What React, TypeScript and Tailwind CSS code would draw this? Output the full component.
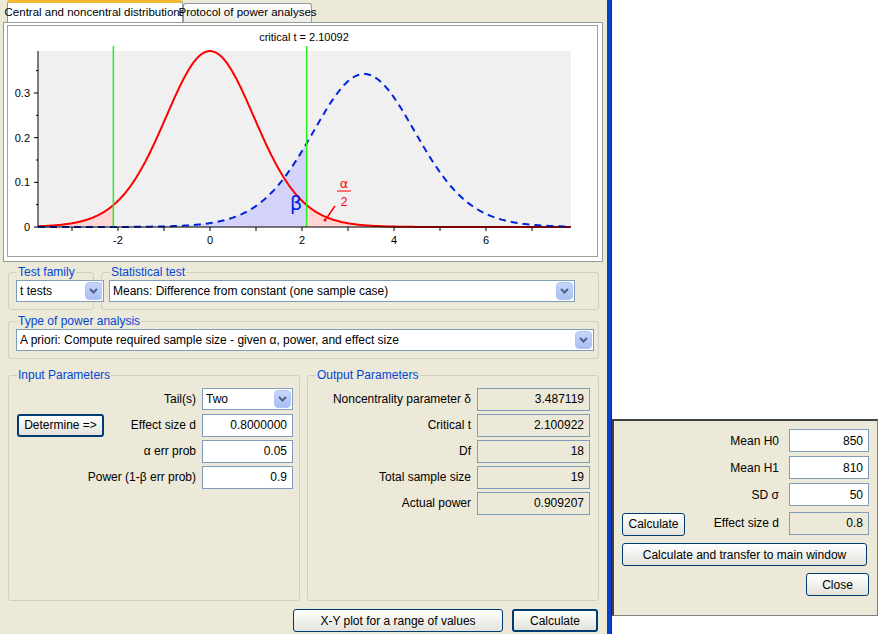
import React from "react";

const X0 = 202, SX = 46, Y0 = 201, SY = 446.7;

function tpdf(t: number, df: number) {
  const c = 0.3939;
  return c * Math.pow(1 + (t * t) / df, -(df + 1) / 2);
}
const central = (t: number) => tpdf(t, 18);
const nonc = (t: number) => tpdf((t - 3.35) / 1.15, 18) / 1.15;

function path(f: (t: number) => number, a: number, b: number) {
  const pts: string[] = [];
  for (let t = a; t <= b; t += 0.02) pts.push(`${(X0 + t * SX).toFixed(1)},${(Y0 - f(t) * SY).toFixed(1)}`);
  return "M" + pts.join("L");
}
function area(f: (t: number) => number, a: number, b: number) {
  return `${path(f, a, b)}L${X0 + b * SX},${Y0}L${X0 + a * SX},${Y0}Z`;
}

function Chart() {
  const crit = 2.10092;
  const cx = (t: number) => X0 + t * SX;
  return (
    <svg width={591} height={230} className="block">
      <rect x={30} y={25} width={533} height={177} fill="#f0f0f0" />
      <path d={area(central, -3.74, -crit)} fill="#ffd6d6" />
      <path d={area(central, crit, 7.85)} fill="#ffd6d6" />
      <path d={area(nonc, -3.74, crit)} fill="#d4d4fa" />
      <path d={path(central, -3.74, 7.85)} fill="none" stroke="#ff0000" strokeWidth={2} />
      <path d={path(nonc, -3.74, 7.85)} fill="none" stroke="#0022dd" strokeWidth={2} strokeDasharray="7 5" />
      <line x1={cx(-crit)} y1={20} x2={cx(-crit)} y2={Y0} stroke="#22ee22" strokeWidth={1.5} />
      <line x1={cx(crit)} y1={20} x2={cx(crit)} y2={Y0} stroke="#22ee22" strokeWidth={1.5} />
      <line x1={30} y1={Y0} x2={563} y2={Y0} stroke="#000" />
      <line x1={30} y1={25} x2={30} y2={Y0} stroke="#000" />
      {[0, 0.1, 0.2, 0.3].map((v) => (
        <g key={v}>
          <line x1={26} x2={30} y1={Y0 - v * SY} y2={Y0 - v * SY} stroke="#000" />
          <text x={22} y={Y0 - v * SY + 4} fontSize={11} textAnchor="end" fontFamily="Liberation Sans, sans-serif">{v}</text>
        </g>
      ))}
      {[0.05, 0.15, 0.25, 0.35].map((v) => (
        <line key={v} x1={28} x2={30} y1={Y0 - v * SY} y2={Y0 - v * SY} stroke="#000" />
      ))}
      {[-3, -2, -1, 0, 1, 2, 3, 4, 5, 6, 7].map((v) => (
        <line key={v} x1={cx(v)} x2={cx(v)} y1={Y0} y2={Y0 + 4} stroke="#000" />
      ))}
      {[-2, 0, 2, 4, 6].map((v) => (
        <text key={v} x={cx(v)} y={Y0 + 17} fontSize={11} textAnchor="middle" fontFamily="Liberation Sans, sans-serif">{v}</text>
      ))}
      <text x={296} y={15} fontSize={11} textAnchor="middle" fontFamily="Liberation Sans, sans-serif">critical t = 2.10092</text>
      <text x={288} y={184} fontSize={19} fill="#0022dd" textAnchor="middle" fontFamily="DejaVu Sans, sans-serif">β</text>
      <text x={336} y={162} fontSize={13} fill="#ff0000" textAnchor="middle" fontFamily="DejaVu Sans, sans-serif">α</text>
      <line x1={329} x2={343} y1={165} y2={165} stroke="#ff0000" />
      <text x={336} y={180} fontSize={12} fill="#ff0000" textAnchor="middle" fontFamily="Liberation Sans, sans-serif">2</text>
      <line x1={327} y1={180} x2={318} y2={193} stroke="#ff0000" strokeWidth={1.5} />
      <circle cx={317} cy={194} r={1.5} fill="#ff0000" />
    </svg>
  );
}

function Chevron() {
  return (
    <div className="w-[17px] h-[18px] mr-[1px] rounded-sm bg-gradient-to-b from-[#c7d5fb] to-[#a9bff3] border border-[#b1c4f4] flex items-center justify-center">
      <svg width="9" height="6" viewBox="0 0 9 6"><path d="M1 1L4.5 4.5L8 1" stroke="#4d6185" strokeWidth="2" fill="none" /></svg>
    </div>
  );
}

function Select({ text, w }: { text: string; w: string }) {
  return (
    <div className={`${w} h-[22px] bg-white border border-[#7f9db9] flex items-center justify-between pl-[3px]`}>
      <span className="truncate">{text}</span>
      <Chevron />
    </div>
  );
}

function Field({ v, out }: { v: string; out?: boolean }) {
  return (
    <div className={`h-[23px] border border-[#7f9db9] flex items-center justify-end pr-[5px] ${out ? "bg-[#ece9d8] w-[113px]" : "bg-white w-[91px]"}`}>{v}</div>
  );
}

function Group({ title, className, children }: { title: string; className: string; children?: React.ReactNode }) {
  return (
    <div className={`relative border border-[#d0d0bf] rounded-[3px] ${className}`}>
      <span className="absolute -top-[9px] left-[8px] px-[1px] bg-[#ece9d8] text-[#0046d5] leading-4">{title}</span>
      {children}
    </div>
  );
}

function Btn({ children, className }: { children: React.ReactNode; className: string }) {
  return (
    <div className={`h-[23px] border border-[#003c74] rounded-[3px] bg-gradient-to-b from-white to-[#e3e3db] flex items-center justify-center whitespace-nowrap ${className}`}>{children}</div>
  );
}

export default function App() {
  const inputs: [string, React.ReactNode][] = [
    ["Effect size d", <Field v="0.8000000" />],
    ["α err prob", <Field v="0.05" />],
    ["Power (1-β err prob)", <Field v="0.9" />],
  ];
  const outputs: [string, string][] = [
    ["Noncentrality parameter δ", "3.487119"],
    ["Critical t", "2.100922"],
    ["Df", "18"],
    ["Total sample size", "19"],
    ["Actual power", "0.909207"],
  ];
  return (
    <div className="w-[880px] h-[635px] flex bg-white text-[12px] text-black overflow-hidden" style={{ fontFamily: "Liberation Sans, Tahoma, sans-serif" }}>
      <div className="w-[607px] h-[634px] bg-[#ece9d8] flex flex-col pl-[3px]">
        <div className="flex items-end h-[22px] pl-[4px] text-[11.5px] whitespace-nowrap">
          <div className="h-[22px] w-[176px] bg-white border border-[#919b9c] border-b-0 border-t-[3px] border-t-[#f5b835] rounded-t-[3px] flex items-center justify-center">Central and noncentral distributions</div>
          <div className="h-[19px] w-[129px] bg-gradient-to-b from-white to-[#ecebe5] border border-[#919b9c] border-b-0 rounded-t-[3px] flex items-center justify-center">Protocol of power analyses</div>
        </div>
        <div className="h-[240px] w-[600px] bg-white border border-[#919b9c] pt-[2px] pl-[3px]">
          <div className="w-[591px] h-[232px] border border-[#a0a0a0]">
            <Chart />
          </div>
        </div>
        <div className="flex gap-[7px] mt-[10px] pl-[5px]">
          <Group title="Test family" className="w-[86px] h-[38px] pt-[7px] pl-[7px]">
            <Select text="t tests" w="w-[88px]" />
          </Group>
          <Group title="Statistical test" className="w-[498px] h-[38px] pt-[7px] pl-[7px]">
            <Select text="Means: Difference from constant (one sample case)" w="w-[466px]" />
          </Group>
        </div>
        <Group title="Type of power analysis" className="ml-[5px] mt-[11px] w-[591px] h-[38px] pt-[7px] pl-[7px]">
          <Select text="A priori: Compute required sample size - given α, power, and effect size" w="w-[578px]" />
        </Group>
        <div className="flex gap-[7px] mt-[16px] pl-[5px]">
          <Group title="Input Parameters" className="w-[292px] h-[226px] pt-[10px] pr-[6px]">
            <div className="flex items-center justify-end gap-[6px] h-[26px]">
              <span>Tail(s)</span>
              <Select text="Two" w="w-[91px]" />
            </div>
            {inputs.map(([l, f], i) => (
              <div key={l} className="flex items-center h-[26px] pl-[8px]">
                {i === 0 && <Btn className="w-[87px] border-2 border-[#2a5ad7]">Determine =&gt;</Btn>}
                <span className="ml-auto mr-[6px]">{l}</span>
                {f}
              </div>
            ))}
          </Group>
          <Group title="Output Parameters" className="w-[292px] h-[226px] pt-[10px] pr-[8px]">
            {outputs.map(([l, v]) => (
              <div key={l} className="flex items-center justify-end gap-[6px] h-[26px]">
                <span>{l}</span>
                <Field v={v} out />
              </div>
            ))}
          </Group>
        </div>
        <div className="flex justify-end gap-[9px] mt-[8px] pr-[9px]">
          <Btn className="w-[210px]">X-Y plot for a range of values</Btn>
          <Btn className="w-[86px] border-2 border-[#2a5ad7]">Calculate</Btn>
        </div>
      </div>
      <div className="w-[5px] h-[634px] bg-[#0a3ecc] border-r border-[#002a9e]" />
      <div className="flex-1 pt-[419px]">
        <div className="w-[266px] h-[197px] bg-[#ece9d8] border-t-2 border-l-2 border-[#404040] border-r border-b border-r-[#808080] border-b-[#808080] px-[8px] pt-[6px]">
          {[["Mean H0", "850"], ["Mean H1", "810"], ["SD σ", "50"]].map(([l, v]) => (
            <div key={l} className="flex items-center justify-end gap-[10px] h-[27px]">
              <span>{l}</span>
              <div className="w-[80px] h-[23px] bg-white border border-[#7f9db9] flex items-center justify-end pr-[5px]">{v}</div>
            </div>
          ))}
          <div className="flex items-center h-[30px]">
            <Btn className="w-[63px] mt-[2px]">Calculate</Btn>
            <span className="ml-auto mr-[10px]">Effect size d</span>
            <div className="w-[80px] h-[23px] border border-[#7f9db9] flex items-center justify-end pr-[5px]">0.8</div>
          </div>
          <Btn className="w-[245px] mt-[5px] bg-gradient-to-b from-[#f4f7fe] to-[#c9d6f3]">Calculate and transfer to main window</Btn>
          <div className="flex justify-end mt-[7px]">
            <Btn className="w-[63px]">Close</Btn>
          </div>
        </div>
      </div>
    </div>
  );
}
